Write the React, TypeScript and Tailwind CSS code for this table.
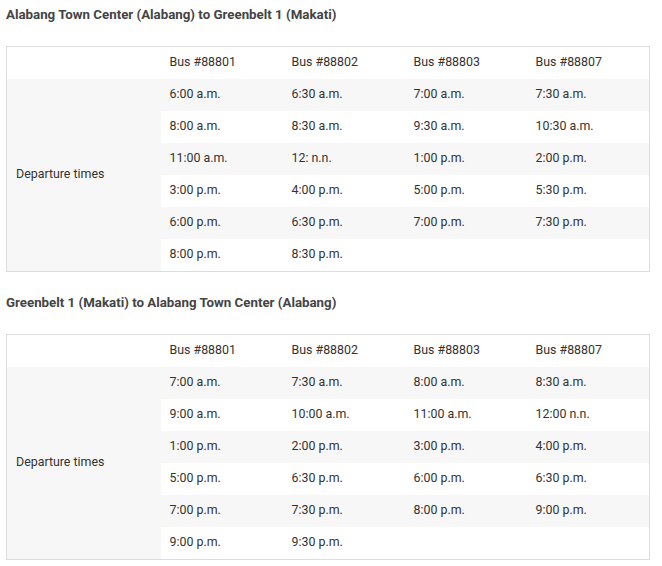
import React from 'react'

type Schedule = {
  title: string
  buses: string[]
  rows: string[][]
}

const schedules: Schedule[] = [
  {
    title: 'Alabang Town Center (Alabang) to Greenbelt 1 (Makati)',
    buses: ['Bus #88801', 'Bus #88802', 'Bus #88803', 'Bus #88807'],
    rows: [
      ['6:00 a.m.', '6:30 a.m.', '7:00 a.m.', '7:30 a.m.'],
      ['8:00 a.m.', '8:30 a.m.', '9:30 a.m.', '10:30 a.m.'],
      ['11:00 a.m.', '12: n.n.', '1:00 p.m.', '2:00 p.m.'],
      ['3:00 p.m.', '4:00 p.m.', '5:00 p.m.', '5:30 p.m.'],
      ['6:00 p.m.', '6:30 p.m.', '7:00 p.m.', '7:30 p.m.'],
      ['8:00 p.m.', '8:30 p.m.', '', ''],
    ],
  },
  {
    title: 'Greenbelt 1 (Makati) to Alabang Town Center (Alabang)',
    buses: ['Bus #88801', 'Bus #88802', 'Bus #88803', 'Bus #88807'],
    rows: [
      ['7:00 a.m.', '7:30 a.m.', '8:00 a.m.', '8:30 a.m.'],
      ['9:00 a.m.', '10:00 a.m.', '11:00 a.m.', '12:00 n.n.'],
      ['1:00 p.m.', '2:00 p.m.', '3:00 p.m.', '4:00 p.m.'],
      ['5:00 p.m.', '6:30 p.m.', '6:00 p.m.', '6:30 p.m.'],
      ['7:00 p.m.', '7:30 p.m.', '8:00 p.m.', '9:00 p.m.'],
      ['9:00 p.m.', '9:30 p.m.', '', ''],
    ],
  },
]

function ScheduleTable({ s }: { s: Schedule }) {
  return (
    <div>
      <h3 className="text-[13.3px] leading-5 font-bold text-[#444]">{s.title}</h3>
      <table className="mt-[21px] w-[644px] table-fixed border-collapse border border-[#dcdcdc] text-[12.4px] text-[#333]">
        <colgroup>
          <col className="w-[154px]" />
          <col className="w-[122px]" />
          <col className="w-[122px]" />
          <col className="w-[122px]" />
          <col />
        </colgroup>
        <tbody>
          <tr className="h-8 bg-white">
            <td />
            {s.buses.map(b => (
              <td key={b} className="px-[9px] text-left align-middle">{b}</td>
            ))}
          </tr>
          {s.rows.map((row, i) => (
            <tr
              key={i}
              className={
                i === s.rows.length - 1
                  ? 'h-[33px] bg-white'
                  : i % 2 === 0
                    ? 'h-8 bg-[#f7f7f7]'
                    : 'h-8 bg-white'
              }
            >
              {i === 0 && (
                <td rowSpan={s.rows.length} className="bg-[#f7f7f7] px-[9px] align-middle">
                  Departure times
                </td>
              )}
              {row.map((t, j) => (
                <td key={j} className="px-[9px] align-middle">{t}</td>
              ))}
            </tr>
          ))}
        </tbody>
      </table>
    </div>
  )
}

export default function App() {
  return (
    <div className="min-h-[566px] w-[662px] bg-white px-[6px] pt-[5px] font-['Roboto',sans-serif]">
      <div className="flex flex-col gap-[21px]">
        {schedules.map(s => (
          <ScheduleTable key={s.title} s={s} />
        ))}
      </div>
    </div>
  )
}
